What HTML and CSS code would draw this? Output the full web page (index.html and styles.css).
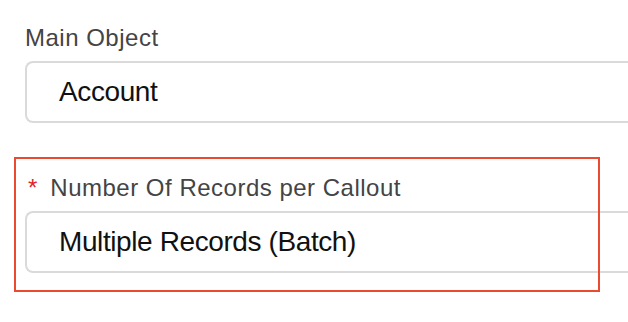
FILE: index.html
```html
<!DOCTYPE html>
<html lang="en">
<head>
    <meta charset="UTF-8">
    <meta name="viewport" content="width=device-width, initial-scale=1.0">
    <title>Callout Settings</title>
    <link rel="stylesheet" href="styles.css">
</head>
<body>
    <div class="form">
        <div class="field">
            <label class="field-label">Main Object</label>
            <div class="field-input">Account</div>
        </div>

        <div class="field field-required">
            <label class="field-label"><abbr class="required" title="required">*</abbr>Number Of Records per Callout</label>
            <div class="field-input">Multiple Records (Batch)</div>
        </div>

        <!-- highlight drawn over the second field -->
        <div class="highlight"></div>
    </div>
</body>
</html>
```

FILE: styles.css
```css
html, body {
    margin: 0;
    padding: 0;
    background-color: #ffffff;
}

.form {
    position: relative;
    width: 628px;
    height: 322px;
    padding-top: 20px;
    box-sizing: border-box;
    font-family: "Liberation Sans", Arial, sans-serif;
}

.field {
    padding-left: 25px;
}

.field + .field {
    margin-top: 47px;
}

.field-label {
    display: block;
    font-size: 24px;
    line-height: 36px;
    letter-spacing: 0.5px;
    color: #444444;
    margin-bottom: 5px;
}

.required {
    display: inline-block;
    color: #e0242a;
    text-decoration: none;
    border: none;
    margin-left: 3px;
    margin-right: 13px;
    letter-spacing: 0;
}

/* the inputs run on past the right edge of the shot */
.field-input {
    height: 62px;
    box-sizing: border-box;
    border: 2px solid #dadada;
    border-right: none;
    border-radius: 8px 0 0 8px;
    padding-left: 32px;
    font-size: 28px;
    line-height: 58px;
    letter-spacing: -0.4px;
    color: #111111;
}

.highlight {
    position: absolute;
    left: 14px;
    top: 157px;
    width: 586px;
    height: 135px;
    box-sizing: border-box;
    border: 2px solid #ea4a2f;
}
```
